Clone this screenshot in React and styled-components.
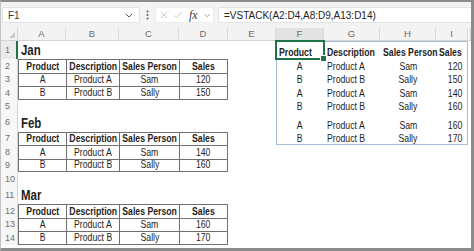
import React from "react";
import styled, { createGlobalStyle } from "styled-components";

const GlobalStyle = createGlobalStyle`
  html, body { margin: 0; padding: 0; background: #ffffff; }
  * { box-sizing: border-box; }
`;

const CELL_FONT = `"Liberation Sans", Arial, sans-serif`;
const UI_FONT = `"Liberation Sans", Arial, sans-serif`;

const COLS = [17, 48, 53, 60, 49, 48, 48, 56, 56, 32, 3];
const ROW_HEIGHTS = [18, 14, 13, 14, 13, 19, 13, 14, 13, 14, 18, 14, 13, 14];
const LETTERS = ["A", "B", "C", "D", "E", "F", "G", "H", "I", ""];

const Frame = styled.div`
  width: 474px;
  height: 251px;
  background: #f3f3f3;
  border-top: 2px solid #8c8c8c;
  border-left: 1px solid #c4c4c4;
  border-right: 3px solid #8c8c8c;
  border-bottom: 3px solid #8c8c8c;
  display: flex;
  flex-direction: column;
  overflow: hidden;
`;

const FormulaBar = styled.div`
  height: 26px;
  display: flex;
  align-items: flex-start;
  padding: 5px 0 0 1px;
  flex: none;
`;

const BarBox = styled.div`
  height: 16px;
  background: #ffffff;
  border: 1px solid #e2e2e2;
  border-radius: 2px;
  display: flex;
  align-items: center;
  font-family: ${UI_FONT};
  font-size: 10px;
  color: #333;
`;

const NameBox = styled(BarBox)`
  width: 138px;
  padding: 0 6px 0 5px;
  justify-content: space-between;
`;

const Dots = styled.div`
  width: 15px;
  height: 16px;
  display: flex;
  align-items: center;
  justify-content: center;
`;

const IconBox = styled(BarBox)`
  width: 59px;
  padding: 0 3px 0 4px;
  gap: 6px;
  border-color: #ececec;
`;

const Fx = styled.span`
  font-family: "Liberation Serif", "Times New Roman", serif;
  font-style: italic;
  font-size: 12px;
  color: #3a3a3a;
  margin-left: 1px;
  line-height: 1;
`;

const FormulaInput = styled(BarBox)`
  flex: 1;
  margin-left: 4px;
  padding-left: 5px;
  border-right: none;
  border-radius: 2px 0 0 2px;
  color: #222;
`;

const Sheet = styled.div`
  display: grid;
  grid-template-columns: ${COLS.map((c) => `${c}px`).join(" ")};
  grid-template-rows: 13px ${ROW_HEIGHTS.map((h) => `${h}px`).join(" ")};
  background: #ffffff;
  flex: none;
`;

const Filler = styled.div`
  flex: 1;
  background: #ffffff;
`;

const Corner = styled.div`
  background: #f3f3f3;
  border-right: 1px solid #d4d4d4;
  border-bottom: 1px solid #d4d4d4;
  position: relative;
  &::after {
    content: "";
    position: absolute;
    right: 2px;
    bottom: 2px;
    border-left: 6px solid transparent;
    border-bottom: 6px solid #c9c9c9;
  }
`;

const ColHead = styled.div`
  background: ${(p) => (p.$active ? "#e3e3e3" : "#f3f3f3")};
  border-right: 1px solid #dadada;
  border-bottom: 1px solid ${(p) => (p.$active ? "#9fbfa9" : "#d4d4d4")};
  font-family: ${UI_FONT};
  font-size: 9.5px;
  color: #6b6b6b;
  display: flex;
  align-items: center;
  justify-content: center;
  line-height: 1;
`;

const RowHead = styled.div`
  background: ${(p) => (p.$active ? "#ebebeb" : "#f7f7f7")};
  border-right: ${(p) => (p.$active ? "2px solid #217346" : "1px solid #d4d4d4")};
  font-family: ${UI_FONT};
  font-size: 9px;
  color: #6e6e6e;
  display: flex;
  align-items: center;
  justify-content: flex-start;
  padding-left: 4px;
  line-height: 1;
`;

const edgeShadow = (edges) => {
  if (!edges) return "none";
  const c = "#a7bde0";
  const list = [];
  if (edges.includes("t")) list.push(`inset 0 1px 0 ${c}`);
  if (edges.includes("b")) list.push(`inset 0 -1px 0 ${c}`);
  if (edges.includes("l")) list.push(`inset 1px 0 0 ${c}`);
  if (edges.includes("r")) list.push(`inset -1px 0 0 ${c}`);
  return list.length ? list.join(", ") : "none";
};

const TB = "#6f6f6f";

const Cell = styled.div`
  position: relative;
  display: flex;
  align-items: flex-end;
  justify-content: ${(p) =>
    p.$align === "center" ? "center" : p.$align === "right" ? "flex-end" : "flex-start"};
  padding: 0 ${(p) => (p.$align === "right" ? "6px" : "2px")} 1px
    ${(p) => (p.$align === "left" ? "3px" : "2px")};
  font-family: ${CELL_FONT};
  font-size: ${(p) => (p.$title ? "14.5px" : "11px")};
  font-weight: ${(p) => (p.$bold || p.$title ? 700 : 400)};
  line-height: ${(p) => (p.$title ? "16px" : "12px")};
  color: #1e1e1e;
  white-space: nowrap;
  border-top: ${(p) => (p.$t ? `1px solid ${TB}` : "none")};
  border-left: ${(p) => (p.$l ? `1px solid ${TB}` : "none")};
  border-right: ${(p) => (p.$r ? `1px solid ${TB}` : "none")};
  border-bottom: ${(p) => (p.$b ? `1px solid ${TB}` : "none")};
  box-shadow: ${(p) => edgeShadow(p.$spill)};
  ${(p) =>
    p.$selected &&
    `
    outline: 2px solid #1f7244;
    outline-offset: -1px;
    z-index: 2;
    &::after {
      content: "";
      position: absolute;
      right: -3px;
      bottom: -3px;
      width: 5px;
      height: 5px;
      background: #1f7244;
      border: 1px solid #ffffff;
    }
  `}
`;

const Txt = styled.span`
  display: inline-block;
  transform: scaleX(0.79);
  transform-origin: ${(p) =>
    p.$align === "center" ? "center" : p.$align === "right" ? "right" : "left"} center;
`;

const ChevronDown = ({ color = "#5a5a5a" }) => (
  <svg width="8" height="5" viewBox="0 0 8 5">
    <path d="M0.8 0.8 L4 4 L7.2 0.8" stroke={color} strokeWidth="1" fill="none" />
  </svg>
);

const VDots = () => (
  <svg width="3" height="10" viewBox="0 0 3 10">
    <circle cx="1.5" cy="1.5" r="1" fill="#5a5a5a" />
    <circle cx="1.5" cy="5" r="1" fill="#5a5a5a" />
    <circle cx="1.5" cy="8.5" r="1" fill="#5a5a5a" />
  </svg>
);

const XIcon = () => (
  <svg width="10" height="10" viewBox="0 0 10 10">
    <path d="M1 1 L9 9 M9 1 L1 9" stroke="#c2c2c2" strokeWidth="1" fill="none" />
  </svg>
);

const CheckIcon = () => (
  <svg width="10" height="10" viewBox="0 0 10 10">
    <path d="M0.8 5.5 L3.6 8.5 L9.2 1.2" stroke="#c2c2c2" strokeWidth="1" fill="none" />
  </svg>
);

/* ---------- data ---------- */
const sections = [
  { title: "Jan", start: 1, rows: [["A", "Product A", "Sam", "120"], ["B", "Product B", "Sally", "150"]] },
  { title: "Feb", start: 6, rows: [["A", "Product A", "Sam", "140"], ["B", "Product B", "Sally", "160"]] },
  { title: "Mar", start: 11, rows: [["A", "Product A", "Sam", "160"], ["B", "Product B", "Sally", "170"]] },
];
const HEADERS = ["Product", "Description", "Sales Person", "Sales"];

function buildGrid() {
  const grid = Array.from({ length: 14 }, () => Array.from({ length: 10 }, () => ({})));
  sections.forEach((s) => {
    const r0 = s.start - 1;
    grid[r0][0] = { text: s.title, title: true, align: "left" };
    const tableRows = [HEADERS, ...s.rows];
    tableRows.forEach((row, i) => {
      row.forEach((txt, c) => {
        grid[r0 + 1 + i][c] = {
          text: txt,
          bold: i === 0,
          align: "center",
          t: true,
          l: true,
          r: c === 3,
          b: i === tableRows.length - 1,
        };
      });
    });
  });
  const spill = [HEADERS, ...sections.flatMap((s) => s.rows)];
  spill.forEach((row, i) => {
    row.forEach((txt, c) => {
      let edges = "";
      if (i === 0) edges += "t";
      if (i === spill.length - 1) edges += "b";
      if (c === 0) edges += "l";
      if (c === 3) edges += "r";
      const aligns = i === 0 ? ["left", "left", "left", "left"] : ["center", "left", "center", "right"];
      grid[i][5 + c] = {
        text: txt,
        bold: i === 0,
        align: aligns[c],
        spill: edges,
        selected: i === 0 && c === 0,
      };
    });
  });
  return grid;
}

const GRID = buildGrid();

export default function App() {
  return (
    <>
      <GlobalStyle />
      <Frame>
        <FormulaBar>
          <NameBox>
            <span>F1</span>
            <ChevronDown />
          </NameBox>
          <Dots>
            <VDots />
          </Dots>
          <IconBox>
            <XIcon />
            <CheckIcon />
            <Fx>fx</Fx>
            <ChevronDown color="#8a8a8a" />
          </IconBox>
          <FormulaInput>=VSTACK(A2:D4,A8:D9,A13:D14)</FormulaInput>
        </FormulaBar>
        <Sheet>
          <Corner />
          {LETTERS.map((l, i) => (
            <ColHead key={`h${i}`} $active={l === "F"}>
              {l}
            </ColHead>
          ))}
          {GRID.map((row, r) => (
            <React.Fragment key={`r${r}`}>
              <RowHead $active={r === 0}>{r + 1}</RowHead>
              {row.map((cell, c) => (
                <Cell
                  key={`c${r}-${c}`}
                  $align={cell.align}
                  $bold={cell.bold}
                  $title={cell.title}
                  $t={cell.t}
                  $l={cell.l}
                  $r={cell.r}
                  $b={cell.b}
                  $spill={cell.spill}
                  $selected={cell.selected}
                >
                  {cell.text ? <Txt $align={cell.align}>{cell.text}</Txt> : null}
                </Cell>
              ))}
            </React.Fragment>
          ))}
        </Sheet>
        <Filler />
      </Frame>
    </>
  );
}
